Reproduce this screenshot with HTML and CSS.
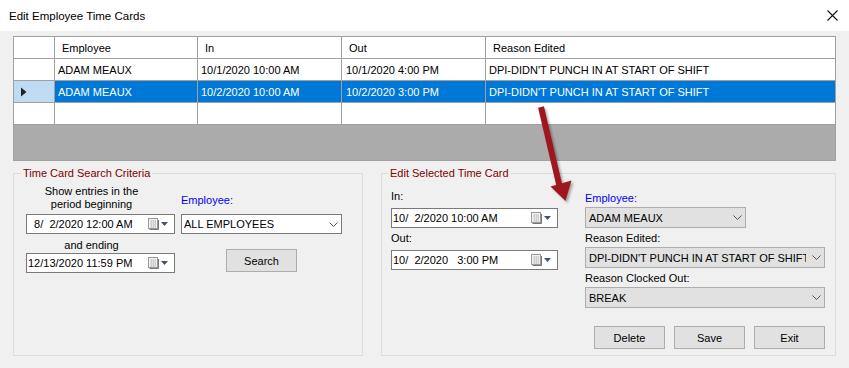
FILE: index.html
```html
<!DOCTYPE html>
<html lang="en">
<head>
  <meta charset="UTF-8">
  <title>Edit Employee Time Cards</title>
  <link rel="stylesheet" href="styles.css">
</head>
<body>
  <div class="window">
    <!-- Title bar -->
    <div class="titlebar">
      <span class="title">Edit Employee Time Cards</span>
      <svg class="close" width="11" height="11" viewBox="0 0 11 11">
        <path d="M0.5 0.5l10 10M10.5 0.5l-10 10" stroke="#111" stroke-width="1.1" fill="none"/>
      </svg>
    </div>

    <div class="content">
      <!-- Time card grid -->
      <div class="grid">
        <div class="grid-row head">
          <div class="cell rh"></div>
          <div class="cell">Employee</div>
          <div class="cell">In</div>
          <div class="cell">Out</div>
          <div class="cell">Reason Edited</div>
        </div>
        <div class="grid-row">
          <div class="cell rh"></div>
          <div class="cell">ADAM MEAUX</div>
          <div class="cell">10/1/2020 10:00 AM</div>
          <div class="cell out">10/1/2020 4:00 PM</div>
          <div class="cell">DPI-DIDN'T PUNCH IN AT START OF SHIFT</div>
        </div>
        <div class="grid-row selected">
          <div class="cell rh">
            <svg width="6" height="10" viewBox="0 0 6 10"><path d="M0 0.5L5.5 5 0 9.5z" fill="#222"/></svg>
          </div>
          <div class="cell">ADAM MEAUX</div>
          <div class="cell">10/2/2020 10:00 AM</div>
          <div class="cell out">10/2/2020 3:00 PM</div>
          <div class="cell">DPI-DIDN'T PUNCH IN AT START OF SHIFT</div>
        </div>
        <div class="grid-row">
          <div class="cell rh"></div>
          <div class="cell"></div>
          <div class="cell"></div>
          <div class="cell"></div>
          <div class="cell"></div>
        </div>
        <div class="grid-empty"></div>
      </div>

      <div class="panels">
        <!-- Search criteria -->
        <fieldset class="group group-search">
          <legend>Time Card Search Criteria</legend>
          <div class="group-body">
            <div class="col col-dates">
              <div class="caption">Show entries in the<br>period beginning</div>
              <div class="picker">
                <span class="picker-text">  8/  2/2020 12:00 AM</span>
                <svg class="cal" width="11" height="12" viewBox="0 0 11 12">
                  <rect x="0.5" y="0.5" width="9" height="10" fill="#f2f2f2" stroke="#9a9a9a"/>
                  <path d="M2 3h6M2 5h6M2 7h6M2 9h6M3.5 2v8M5.5 2v8M7.5 2v8" stroke="#c8c8c8" stroke-width="0.8"/>
                  <path d="M10.5 2v9.5H1.5" stroke="#777" fill="none"/>
                </svg>
                <svg class="drop" width="7" height="4" viewBox="0 0 7 4"><path d="M0 0h7L3.5 4z" fill="#44546f"/></svg>
              </div>
              <div class="caption caption-end">and ending</div>
              <div class="picker">
                <span class="picker-text">12/13/2020 11:59 PM</span>
                <svg class="cal" width="11" height="12" viewBox="0 0 11 12">
                  <rect x="0.5" y="0.5" width="9" height="10" fill="#f2f2f2" stroke="#9a9a9a"/>
                  <path d="M2 3h6M2 5h6M2 7h6M2 9h6M3.5 2v8M5.5 2v8M7.5 2v8" stroke="#c8c8c8" stroke-width="0.8"/>
                  <path d="M10.5 2v9.5H1.5" stroke="#777" fill="none"/>
                </svg>
                <svg class="drop" width="7" height="4" viewBox="0 0 7 4"><path d="M0 0h7L3.5 4z" fill="#44546f"/></svg>
              </div>
            </div>
            <div class="col col-employee">
              <div class="label label-blue">Employee:</div>
              <div class="combo combo-white">
                <span class="combo-text">ALL EMPLOYEES</span>
                <svg class="chev" width="9" height="5" viewBox="0 0 9 5"><path d="M0.5 0.5l4 4 4-4" stroke="#555" fill="none"/></svg>
              </div>
              <div class="button btn-search">Search</div>
            </div>
          </div>
        </fieldset>

        <!-- Edit selected card -->
        <fieldset class="group group-edit">
          <legend>Edit Selected Time Card</legend>
          <div class="group-body">
            <div class="col col-times">
              <div class="label">In:</div>
              <div class="picker">
                <span class="picker-text">10/  2/2020 10:00 AM</span>
                <svg class="cal" width="11" height="12" viewBox="0 0 11 12">
                  <rect x="0.5" y="0.5" width="9" height="10" fill="#f2f2f2" stroke="#9a9a9a"/>
                  <path d="M2 3h6M2 5h6M2 7h6M2 9h6M3.5 2v8M5.5 2v8M7.5 2v8" stroke="#c8c8c8" stroke-width="0.8"/>
                  <path d="M10.5 2v9.5H1.5" stroke="#777" fill="none"/>
                </svg>
                <svg class="drop" width="7" height="4" viewBox="0 0 7 4"><path d="M0 0h7L3.5 4z" fill="#44546f"/></svg>
              </div>
              <div class="label label-out">Out:</div>
              <div class="picker">
                <span class="picker-text">10/  2/2020   3:00 PM</span>
                <svg class="cal" width="11" height="12" viewBox="0 0 11 12">
                  <rect x="0.5" y="0.5" width="9" height="10" fill="#f2f2f2" stroke="#9a9a9a"/>
                  <path d="M2 3h6M2 5h6M2 7h6M2 9h6M3.5 2v8M5.5 2v8M7.5 2v8" stroke="#c8c8c8" stroke-width="0.8"/>
                  <path d="M10.5 2v9.5H1.5" stroke="#777" fill="none"/>
                </svg>
                <svg class="drop" width="7" height="4" viewBox="0 0 7 4"><path d="M0 0h7L3.5 4z" fill="#44546f"/></svg>
              </div>
            </div>
            <div class="col col-fields">
              <div class="label label-blue">Employee:</div>
              <div class="combo combo-gray combo-short">
                <span class="combo-text">ADAM MEAUX</span>
                <svg class="chev" width="9" height="5" viewBox="0 0 9 5"><path d="M0.5 0.5l4 4 4-4" stroke="#555" fill="none"/></svg>
              </div>
              <div class="label label-next">Reason Edited:</div>
              <div class="combo combo-gray">
                <span class="combo-text">DPI-DIDN'T PUNCH IN AT START OF SHIFT</span>
                <svg class="chev" width="9" height="5" viewBox="0 0 9 5"><path d="M0.5 0.5l4 4 4-4" stroke="#555" fill="none"/></svg>
              </div>
              <div class="label label-next">Reason Clocked Out:</div>
              <div class="combo combo-gray">
                <span class="combo-text">BREAK</span>
                <svg class="chev" width="9" height="5" viewBox="0 0 9 5"><path d="M0.5 0.5l4 4 4-4" stroke="#555" fill="none"/></svg>
              </div>
              <div class="actions">
                <div class="button">Delete</div>
                <div class="button">Save</div>
                <div class="button">Exit</div>
              </div>
            </div>
          </div>
        </fieldset>
      </div>
    </div>

    <!-- Red annotation arrow drawn over the form -->
    <svg class="annot-arrow" width="50" height="110" viewBox="530 100 50 110">
      <path d="M541 107L559.5 186" stroke="#a0161f" stroke-width="6" fill="none"/>
      <path d="M550.5 186.5L571.5 180.5L565.5 201z" fill="#a0161f"/>
    </svg>
  </div>
</body>
</html>
```

FILE: styles.css
```css
/* Basic Reset */
* {
  box-sizing: border-box;
}

body {
  margin: 0;
  width: 849px;
  height: 368px;
  overflow: hidden;
  background: #f0f0f0;
  font-family: "Liberation Sans", Arial, sans-serif;
  font-size: 11px;
  color: #000;
}

.window {
  position: relative;
  height: 368px;
}

/* Title bar */
.titlebar {
  height: 31px;
  background: #fff;
  display: flex;
  align-items: center;
  justify-content: space-between;
  padding: 0 11px 0 9px;
}

.title {
  font-size: 11.5px;
  color: #000;
}

.content {
  padding: 5px 13px 0 13px;
}

/* Data grid */
.grid {
  border: 1px solid #a0a0a0;
  background: #ababab;
}

.grid-row {
  display: grid;
  grid-template-columns: 41px 143px 144px 144px 349px;
  height: 22px;
  background: #fff;
}

.cell {
  border-right: 1px solid #a0a0a0;
  border-bottom: 1px solid #a0a0a0;
  padding-left: 3px;
  display: flex;
  align-items: center;
  white-space: nowrap;
  overflow: hidden;
}

.cell:last-child {
  border-right: none;
}

.cell.out {
  padding-left: 4px;
}

.head .cell {
  padding-left: 7px;
}

.cell.rh {
  padding-left: 7px;
}

.selected .cell {
  background: #0078d7;
  color: #fff;
}

.selected .cell.rh {
  background: #bfdbf3;
}

.grid-empty {
  height: 35px;
  background: #ababab;
}

/* Group boxes */
.panels {
  display: flex;
  gap: 18px;
  margin-top: 5px;
}

.group {
  margin: 0;
  padding: 0;
  min-width: 0;
  border: 1px solid #dcdcdc;
}

.group legend {
  padding: 0 2px;
  line-height: 14px;
  font-size: 11px;
  color: #800000;
}

.group-search {
  width: 350px;
}

.group-search legend {
  margin-left: 7px;
}

.group-edit {
  width: 455px;
}

.group-edit legend {
  margin-left: 6px;
}

.group-body {
  display: flex;
  height: 175px;
}

.group-search .group-body {
  padding: 0 20px 0 12px;
  gap: 6px;
}

.group-edit .group-body {
  padding: 0 10px 0 9px;
  gap: 27px;
}

.col {
  display: flex;
  flex-direction: column;
}

.col-dates {
  width: 149px;
  padding-top: 5px;
}

.col-employee {
  width: 161px;
  padding-top: 14px;
}

.col-times {
  width: 167px;
  padding-top: 10px;
}

.col-fields {
  width: 240px;
  padding-top: 12px;
}

.caption {
  line-height: 13px;
  text-align: center;
  padding-right: 18px;
  margin-bottom: 3px;
}

.caption-end {
  margin-top: 5px;
  margin-bottom: 1px;
}

.label {
  line-height: 13px;
}

.label-blue {
  color: #0000ff;
}

.col-employee .label {
  margin-bottom: 7px;
}

.col-times .label {
  margin-bottom: 5px;
}

.col-times .label-out {
  margin-top: 4px;
}

.col-fields .label {
  margin-bottom: 2px;
}

.col-fields .label-next {
  margin-top: 4px;
}

/* Date time pickers */
.picker {
  display: flex;
  align-items: center;
  height: 20px;
  background: #fff;
  border: 1px solid #7a7a7a;
  padding: 0 6px 0 1px;
}

.picker-text {
  flex: 1;
  white-space: pre;
}

.cal {
  margin-right: 2px;
}

/* Combo boxes */
.combo {
  display: flex;
  align-items: center;
  height: 21px;
  padding-left: 3px;
}

.combo-text {
  flex: 1;
  white-space: nowrap;
  overflow: hidden;
}

.chev {
  margin: 0 3px 0 6px;
}

.combo-white {
  height: 20px;
  background: #fff;
  border: 1px solid #7a7a7a;
  padding-left: 2px;
}

.combo-gray {
  background: #e1e1e1;
  border: 1px solid #adadad;
}

.combo-short {
  width: 161px;
}

/* Buttons */
.button {
  width: 71px;
  height: 23px;
  display: flex;
  align-items: center;
  justify-content: center;
  background: #e1e1e1;
  border: 1px solid #adadad;
}

.btn-search {
  align-self: center;
  margin-top: 15px;
}

.actions {
  display: flex;
  justify-content: flex-end;
  gap: 9px;
  margin-top: 18px;
}

/* Annotation arrow over the form */
.annot-arrow {
  position: absolute;
  left: 530px;
  top: 100px;
  filter: drop-shadow(2px 2px 1px rgba(0, 0, 0, 0.3));
}
```
